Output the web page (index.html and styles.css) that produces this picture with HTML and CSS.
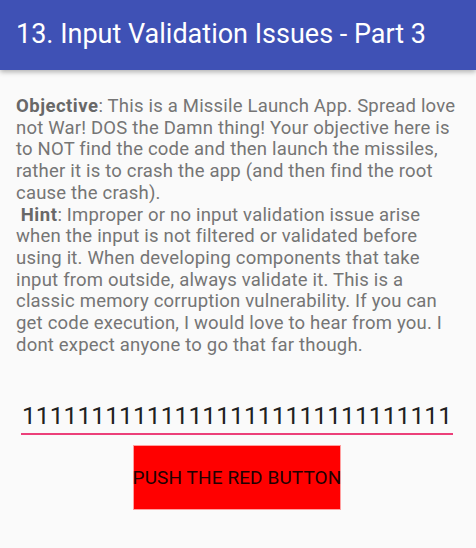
FILE: index.html
```html
<!DOCTYPE html>
<html>
<head>
<meta charset="utf-8">
<link rel="stylesheet" href="styles.css">
</head>
<body>
<header class="appbar">
  <h1 class="title">13. Input Validation Issues - Part 3</h1>
</header>
<main class="content">
  <p class="desc"><b>Objective</b>: This is a Missile Launch App. Spread love not War! DOS the Damn thing! Your objective here is to NOT find the code and then launch the missiles, rather it is to crash the app (and then find the root cause the crash).<br>&nbsp;<b>Hint</b>: Improper or no input validation issue arise when the input is not filtered or validated before using it. When developing components that take input from outside, always validate it. This is a classic memory corruption vulnerability. If you can get code execution, I would love to hear from you. I dont expect anyone to go that far though.</p>
  <div class="field">
    <span class="field-text">1111111111111111111111111111111</span>
  </div>
  <div class="actions">
    <button class="red-btn">PUSH THE RED BUTTON</button>
  </div>
</main>
</body>
</html>
```

FILE: styles.css
```css
html, body {
  margin: 0;
  padding: 0;
  background: #fafafa;
  width: 476px;
  height: 548px;
  overflow: hidden;
  font-family: Roboto, "Noto Sans", sans-serif;
}
.appbar {
  height: 70px;
  box-sizing: border-box;
  background: #3f51b5;
  display: flex;
  align-items: center;
  padding: 0 16px 2px 16px;
  box-shadow: 0 2px 5px rgba(0,0,0,0.3);
  position: relative;
}
.title {
  margin: 0;
  color: #ffffff;
  font-weight: 400;
  font-size: 27px;
  line-height: 30px;
  white-space: nowrap;
}
.content {
  padding: 26px 16px 0 16px;
}
.desc {
  margin: 0 -2px 0 0;
  color: #757575;
  font-size: 18.5px;
  line-height: 21.7px;
  letter-spacing: 0.2px;
}
.desc b {
  font-weight: 700;
  color: #686868;
  letter-spacing: 0.5px;
}
.field {
  margin: 45.5px 7px 0 5px;
  border-bottom: 2.5px solid #ec407a;
  padding: 0 0 3px 1px;
}
.field-text {
  font-size: 24.7px;
  line-height: 28px;
  color: #212121;
  display: block;
  white-space: nowrap;
}
.actions {
  display: flex;
  justify-content: center;
  margin-top: 10px;
}
.red-btn {
  width: 208px;
  height: 65px;
  margin-right: 2px;
  background: #ff0000;
  border: 1px solid #ffa0a0;
  color: #200000;
  font-family: Roboto, sans-serif;
  font-size: 19px;
  letter-spacing: 0.1px;
  padding: 0;
  white-space: nowrap;
  display: flex;
  align-items: center;
  justify-content: center;
  overflow: visible;
}
```
